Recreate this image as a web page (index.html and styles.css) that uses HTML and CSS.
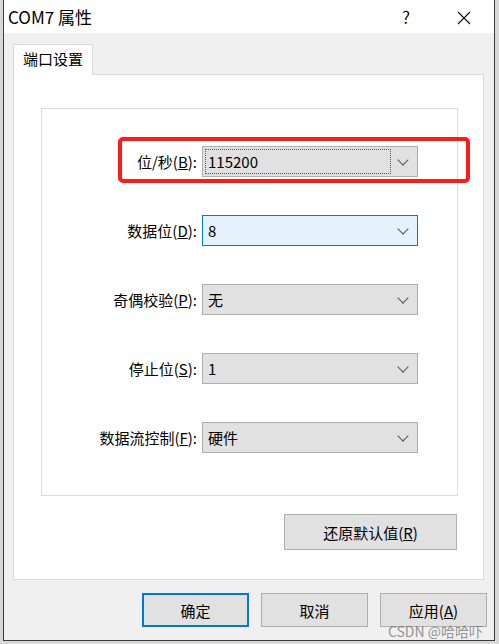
FILE: index.html
```html
<!doctype html>
<html>
<head>
<meta charset="utf-8">
<title>COM7 属性</title>
<link rel="stylesheet" href="styles.css">
</head>
<body>
	<div class="window">
		<div class="titlebar">
			<span class="title">COM7 属性</span>
			<span class="help">?</span>
			<span class="close">
				<svg width="14" height="14" viewBox="0 0 14 14"><path d="M1 1L13 13M13 1L1 13" stroke="#111" stroke-width="1.1" fill="none"/></svg>
			</span>
		</div>
		<div class="client">
			<div class="tabs">
				<div class="tab">端口设置</div>
			</div>
			<div class="panel">
				<div class="group">
					<div class="row highlight">
						<label>位/秒(<u>B</u>):</label>
						<div class="combo"><span class="value focus">115200</span><span class="arrow"></span></div>
					</div>
					<div class="row">
						<label>数据位(<u>D</u>):</label>
						<div class="combo hot"><span class="value">8</span><span class="arrow"></span></div>
					</div>
					<div class="row">
						<label>奇偶校验(<u>P</u>):</label>
						<div class="combo"><span class="value">无</span><span class="arrow"></span></div>
					</div>
					<div class="row">
						<label>停止位(<u>S</u>):</label>
						<div class="combo"><span class="value">1</span><span class="arrow"></span></div>
					</div>
					<div class="row">
						<label>数据流控制(<u>F</u>):</label>
						<div class="combo"><span class="value">硬件</span><span class="arrow"></span></div>
					</div>
				</div>
				<div class="panel-foot">
					<button class="btn reset">还原默认值(<u>R</u>)</button>
				</div>
			</div>
			<div class="buttons">
				<button class="btn default">确定</button>
				<button class="btn">取消</button>
				<button class="btn">应用(<u>A</u>)</button>
			</div>
			<div class="watermark">CSDN @哈哈吓</div>
		</div>
	</div>
</body>
</html>
```

FILE: styles.css
```css
*, *::before, *::after{box-sizing: border-box;}
body{
	margin: 0;
	background-color: #d8d8d8;
	font-family: "Noto Sans CJK SC", "Noto Sans", sans-serif;
	width: 499px;
	height: 644px;
	overflow: hidden;
}
.window{
	margin-left: 3px;
	width: 492px;
	height: 641px;
	background-color: #f0f0f0;
	border-left: 1px solid #3c3c3c;
	border-right: 1px solid #3c3c3c;
	border-bottom: 1px solid #3c3c3c;
	position: relative;
}
.titlebar{
	height: 33px;
	background-color: #fff;
	display: flex;
	align-items: center;
	padding-left: 4px;
}
.title{
	font-size: 17px;
	color: #000;
	flex: 1;
}
.help{
	font-size: 17px;
	width: 20px;
	margin-right: 25px;
	color: #111;
}
.close{
	width: 34px;
	margin-right: 13px;
	display: flex;
	align-items: center;
	justify-content: center;
	padding-top: 2px;
}
.client{
	padding: 11px 0 0 9px;
}
.tabs{
	display: flex;
	height: 30px;
}
.tab{
	width: 80px;
	height: 31px;
	border: 1px solid #d9d9d9;
	border-bottom: none;
	background-color: #fff;
	font-size: 15px;
	padding: 3px 0 0 9px;
	position: relative;
	z-index: 1;
}
.panel{
	width: 471px;
	height: 506px;
	background-color: #fff;
	border: 1px solid #d9d9d9;
	padding: 33px 0 0 27px;
}
.group{
	width: 417px;
	height: 388px;
	border: 1px solid #dcdcdc;
	padding: 37px 39px 0 0;
	display: grid;
	grid-template-columns: 1fr 216px;
	grid-auto-rows: 31px;
	row-gap: 38px;
	position: relative;
}
.row{
	display: contents;
}
.row label{
	font-size: 15px;
	color: #000;
	display: flex;
	align-items: center;
	justify-content: flex-end;
	padding-right: 5px;
}
.combo{
	border: 1px solid #adadad;
	background-color: #e1e1e1;
	display: flex;
	align-items: center;
	padding: 2px;
}
.combo.hot{
	border-color: #0078d7;
	background-color: #e5f1fb;
}
.value{
	flex: 1;
	height: 25px;
	font-size: 15px;
	line-height: 23px;
	padding-left: 2px;
	margin-right: 8px;
	border: 1px solid transparent;
}
.value.focus{
	border: 1px dotted #555;
}
.arrow{
	width: 8px;
	height: 8px;
	border-right: 1.2px solid #555;
	border-bottom: 1.2px solid #555;
	transform: rotate(45deg);
	margin: -4px 8px 0 0;
}
.highlight label::after{
	content: "";
	position: absolute;
	left: 76px;
	top: 28px;
	width: 352px;
	height: 46px;
	border: 4px solid #ff1a1a;
	border-radius: 5px;
	pointer-events: none;
}
.panel-foot{
	display: flex;
	justify-content: flex-end;
	padding: 18px 26px 0 0;
}
.btn{
	font-family: inherit;
	font-size: 15px;
	color: #000;
	background-color: #e1e1e1;
	border: 1px solid #adadad;
	width: 107px;
	height: 34px;
	padding: 0;
}
.btn.reset{
	width: 173px;
	height: 36px;
}
.buttons{
	display: flex;
	justify-content: flex-end;
	gap: 12px;
	padding: 13px 7px 0 0;
}
.btn.default{
	border: 2px solid #0078d7;
}
.watermark{
	position: absolute;
	right: 11px;
	bottom: 1px;
	font-family: "Noto Sans CJK SC", sans-serif;
	font-size: 14px;
	line-height: 15px;
	color: rgba(120,120,120,0.8);
}
```
